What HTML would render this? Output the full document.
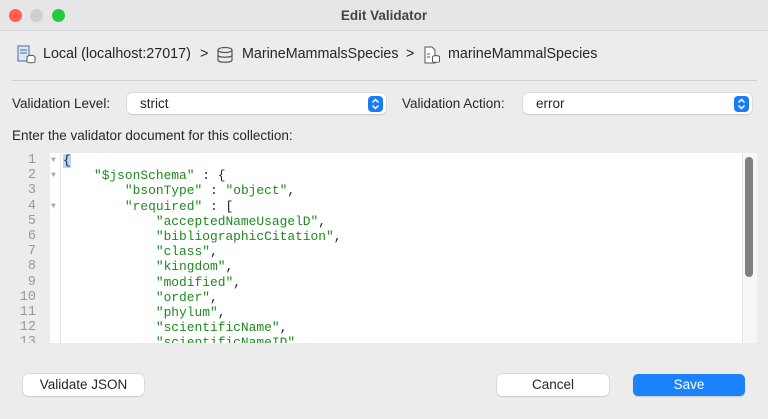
<!DOCTYPE html>
<html><head><style>
*{margin:0;padding:0;box-sizing:border-box}
body{width:768px;height:419px;background:#ececec;font-family:"Liberation Sans",sans-serif;color:#262626;position:relative;overflow:hidden;font-size:13px}
.abs{position:absolute}
.title{left:0;top:0;width:768px;height:31px;background:#e6e6e6;border-bottom:1px solid #d6d6d6;text-align:center;line-height:31px;font-weight:bold;font-size:13.5px;color:#444}
.dot{width:13px;height:13px;border-radius:50%;top:9px}
.sel{background:#fff;border-radius:5px;box-shadow:0 0 0 0.5px #c8c8c8,0 1px 1px rgba(0,0,0,.15);height:21px;font-size:13.5px;line-height:21px;padding-left:13px}
.arr{position:absolute;right:3px;top:3px;width:15px;height:16px;border-radius:4px;background:#1a7cf5;color:#fff}
.btn{background:#fff;border-radius:5px;box-shadow:0 0 0 0.5px #c8c8c8,0 1px 1px rgba(0,0,0,.15);height:22px;text-align:center;line-height:22px;font-size:13.5px}
.code{font-family:"Liberation Mono",monospace;font-size:12.9px;line-height:15.2px;white-space:pre}
.g{color:#1d8a1d}
.gut{color:#999;text-align:right;width:24px}
.bc{font-size:14.3px;top:46px}
</style></head><body>
<div class="abs title">Edit Validator</div>
<div class="abs dot" style="left:9px;background:#fe5f57"></div>
<div class="abs dot" style="left:30px;background:#cfcfcf"></div>
<div class="abs dot" style="left:52px;background:#28c840"></div>

<svg class="abs" style="left:17px;top:45px" width="20" height="20" viewBox="0 0 20 20"><rect x="1" y="1" width="11" height="15" fill="#dbe7f5" stroke="#4a6a9a"/><line x1="3" y1="5" x2="10" y2="5" stroke="#4a6a9a"/><line x1="3" y1="8" x2="10" y2="8" stroke="#4a6a9a"/><ellipse cx="14" cy="12" rx="4" ry="1.6" fill="#fff" stroke="#555"/><path d="M10 12v5c0 1 8 1 8 0v-5" fill="#fff" stroke="#555"/></svg>
<div class="abs bc" style="left:43px">Local (localhost:27017)</div>
<div class="abs bc" style="left:200px">&gt;</div>
<svg class="abs" style="left:216px;top:46px" width="18" height="18" viewBox="0 0 18 18"><ellipse cx="9" cy="4" rx="7" ry="2.5" fill="none" stroke="#555" stroke-width="1.2"/><path d="M2 4v10c0 3 14 3 14 0V4M2 9c0 3 14 3 14 0" fill="none" stroke="#555" stroke-width="1.2"/></svg>
<div class="abs bc" style="left:242px">MarineMammalsSpecies</div>
<div class="abs bc" style="left:406px">&gt;</div>
<svg class="abs" style="left:423px;top:46px" width="18" height="18" viewBox="0 0 18 18"><path d="M2 1h7l3 3v13H2z" fill="#fff" stroke="#555"/><line x1="4" y1="8" x2="7" y2="8" stroke="#555"/><line x1="4" y1="11" x2="7" y2="11" stroke="#555"/><ellipse cx="13" cy="11" rx="3.5" ry="1.4" fill="#fff" stroke="#555"/><path d="M9.5 11v4.5c0 1 7 1 7 0V11" fill="#fff" stroke="#555"/></svg>
<div class="abs bc" style="left:448px">marineMammalSpecies</div>
<div class="abs" style="left:12px;top:80px;width:745px;height:1px;background:#cfcfcf"></div>

<div class="abs" style="left:12px;top:96px;font-size:13.5px">Validation Level:</div>
<div class="abs sel" style="left:127px;top:93px;width:259px">strict<div class="arr"><svg width="15" height="16" viewBox="0 0 15 16"><path d="M4.5 6.5l3-3 3 3M4.5 9.5l3 3 3-3" fill="none" stroke="#fff" stroke-width="1.5"/></svg></div></div>
<div class="abs" style="left:402px;top:96px;font-size:13.5px">Validation Action:</div>
<div class="abs sel" style="left:523px;top:93px;width:229px">error<div class="arr"><svg width="15" height="16" viewBox="0 0 15 16"><path d="M4.5 6.5l3-3 3 3M4.5 9.5l3 3 3-3" fill="none" stroke="#fff" stroke-width="1.5"/></svg></div></div>
<div class="abs" style="left:12px;top:128px;font-size:13.5px">Enter the validator document for this collection:</div>

<div class="abs" style="left:50px;top:153px;width:692px;height:190px;background:#fff;overflow:hidden"></div>
<div class="abs" style="left:60px;top:153px;width:1px;height:190px;background:#e8e8e8"></div>
<div class="abs" style="left:742px;top:153px;width:15px;height:190px;background:#f6f6f6;border-left:1px solid #e4e4e4"></div>
<div class="abs" style="left:745px;top:157px;width:8px;height:120px;background:#7f7f7f;border-radius:4px"></div>
<div class="abs code gut" style="left:12px;top:153px;height:190px;overflow:hidden;font-size:13.5px">1
2
3
4
5
6
7
8
9
10
11
12
13</div>
<div class="abs code" style="left:51px;top:153px;color:#aaa;font-size:8px;line-height:15.2px">▼
▼

▼</div>
<div class="abs" style="left:63px;top:154px;width:8px;height:14px;background:#b4d5fe"></div>
<div class="abs code" style="left:63px;top:153px;height:190px;overflow:hidden;color:#222">{
    <span class="g">"$jsonSchema"</span> : {
        <span class="g">"bsonType"</span> : <span class="g">"object"</span>,
        <span class="g">"required"</span> : [
            <span class="g">"acceptedNameUsagelD"</span>,
            <span class="g">"bibliographicCitation"</span>,
            <span class="g">"class"</span>,
            <span class="g">"kingdom"</span>,
            <span class="g">"modified"</span>,
            <span class="g">"order"</span>,
            <span class="g">"phylum"</span>,
            <span class="g">"scientificName"</span>,
            <span class="g">"scientificNameID"</span></div>

<div class="abs btn" style="left:23px;top:374px;width:121px">Validate JSON</div>
<div class="abs btn" style="left:497px;top:374px;width:112px">Cancel</div>
<div class="abs btn" style="left:633px;top:374px;width:112px;background:#1a82fb;color:#fff;box-shadow:0 1px 1px rgba(0,0,0,.15)">Save</div>
</body></html>
